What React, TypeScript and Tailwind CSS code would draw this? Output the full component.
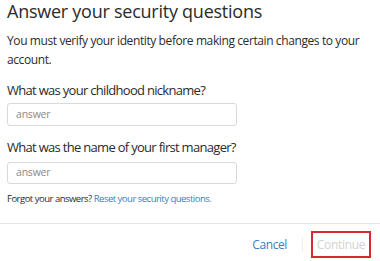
export default function App() {
  return (
    <div className="w-[380px] h-[261px] bg-white overflow-hidden font-['Open_Sans',sans-serif] text-[#2b2b2b]">
      <div className="pl-[7px] pr-2">
        <h1 className="text-[18px] leading-[22px] tracking-[-0.25px] text-[#2b2b2b]">Answer your security questions</h1>
        <p className="mt-[10px] text-[12px] leading-[18.5px] tracking-[-0.4px]">
          You must verify your identity before making certain changes to your account.
        </p>
        <div className="mt-[11px] text-[13px] leading-[20px] tracking-[-0.7px]">What was your childhood nickname?</div>
        <div className="mt-[3px] w-[230px] h-[23px] border border-[#dadada] rounded-[3px] flex items-center pl-[8px] text-[10.5px] tracking-[-0.2px] text-[#8a8a8a]">answer</div>
        <div className="mt-[11px] text-[13px] leading-[20px] tracking-[-0.7px]">What was the name of your first manager?</div>
        <div className="mt-[5px] w-[230px] h-[22px] border border-[#dadada] rounded-[3px] flex items-center pl-[8px] text-[10.5px] tracking-[-0.2px] text-[#8a8a8a]">answer</div>
        <div className="mt-[8px] text-[9.5px] leading-[14px] tracking-[-0.5px]">
          Forgot your answers? <span className="text-[#3b7dc0]">Reset your security questions.</span>
        </div>
      </div>
      <div className="mt-[17px] border-t border-[#e6e6e6] flex items-center justify-end pr-[9px] pt-[7px]">
        <span className="text-[12px] text-[#3b7dc0] tracking-[-0.4px]">Cancel</span>
        <div className="ml-[15px] w-px h-[15px] bg-[#ececec]" />
        <div className="ml-[8px] w-[60px] h-[27px] border-2 border-[#d42a30] flex items-center justify-center text-[12px] text-[#d2d2d2] tracking-[-0.3px]">Continue</div>
      </div>
    </div>
  )
}
